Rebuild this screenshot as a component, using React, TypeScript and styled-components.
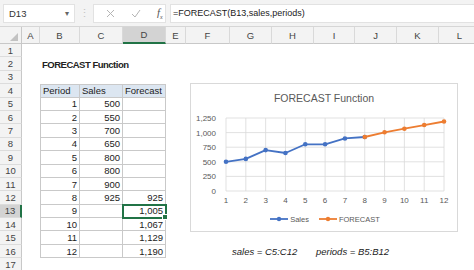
import React from 'react';
import styled, { createGlobalStyle, css } from 'styled-components';

const GlobalStyle = createGlobalStyle`
  html, body { margin: 0; padding: 0; background: #ffffff; }
  body { font-family: 'Liberation Sans', Arial, sans-serif; overflow: hidden; }
`;

const COLS = ['A', 'B', 'C', 'D', 'E', 'F', 'G', 'H', 'I', 'J', 'K', 'L'];
const COL_WIDTHS = [18, 40, 43, 43, 20, 44, 42, 42, 41, 42, 42, 42];
const ROWS = Array.from({ length: 17 }, (_, i) => i + 1);
const SALES = [500, 550, 700, 650, 800, 800, 900, 925];
const FORECAST = ['925', '1,005', '1,067', '1,129', '1,190'];
const GREEN = '#217346';

type CellData = { text: string; align?: 'left' | 'right'; bold?: boolean; italic?: boolean };

// build the cell map for the sheet
const buildCells = () => {
  const cells: Record<string, CellData> = {};
  cells.B2 = { text: 'FORECAST Function', bold: true };
  cells.B4 = { text: 'Period' };
  cells.C4 = { text: 'Sales' };
  cells.D4 = { text: 'Forecast' };
  for (let r = 5; r <= 16; r++) {
    cells[`B${r}`] = { text: String(r - 4), align: 'right' };
  }
  SALES.forEach((v, i) => {
    cells[`C${i + 5}`] = { text: String(v), align: 'right' };
  });
  FORECAST.forEach((v, i) => {
    cells[`D${i + 12}`] = { text: v, align: 'right' };
  });
  cells.G16 = { text: 'sales = C5:C12', italic: true };
  cells.I16 = { text: 'periods = B5:B12', italic: true };
  return cells;
};

const CELLS = buildCells();
const inTable = (col: string, row: number) => ['B', 'C', 'D'].includes(col) && row >= 4 && row <= 16;

// chart geometry (svg coords)
const X0 = 35;
const DX = 19.82;
const Y_ZERO = 86;
const SCALE = 0.0584;
const px = (i: number) => X0 + i * DX;
const py = (v: number) => Y_ZERO - v * SCALE;
const SALES_PTS = SALES.map((v, i) => [px(i), py(v)]);
const FC_PTS = [925, 1005, 1067, 1129, 1190].map((v, i) => [px(i + 7), py(v)]);
const toPath = (pts: number[][]) => pts.map((p, i) => `${i ? 'L' : 'M'}${p[0].toFixed(1)} ${p[1].toFixed(1)}`).join(' ');

const App: React.FC = () => {
  return (
    <Page>
      <GlobalStyle />
      <FormulaBar>
        <NameBox>
          <span>D13</span>
          <DropArrow>▾</DropArrow>
        </NameBox>
        <Grip>⋮</Grip>
        <FxBox>
          <svg width="9" height="9" viewBox="0 0 9 9">
            <path d="M1 1 L8 8 M8 1 L1 8" stroke="#b4b4b4" strokeWidth="1" />
          </svg>
          <svg width="10" height="9" viewBox="0 0 10 9">
            <path d="M1 5 L4 8 L9 1" stroke="#b4b4b4" strokeWidth="1" fill="none" />
          </svg>
          <FxLabel>
            f<sub>x</sub>
          </FxLabel>
        </FxBox>
        <FormulaInput>=FORECAST(B13,sales,periods)</FormulaInput>
      </FormulaBar>

      <Sheet>
        <Corner />
        {COLS.map(c => (
          <ColHeader key={c} $active={c === 'D'}>
            {c}
          </ColHeader>
        ))}
        {ROWS.map(r => (
          <React.Fragment key={r}>
            <RowHeader $active={r === 13}>{r}</RowHeader>
            {COLS.map(c => {
              const data = CELLS[`${c}${r}`];
              const boxed = inTable(c, r);
              return (
                <Cell
                  key={c}
                  $align={data?.align}
                  $bold={data?.bold}
                  $italic={data?.italic}
                  $boxed={boxed}
                  $leftEdge={boxed && c === 'B'}
                  $topEdge={boxed && r === 4}
                  $fill={boxed && r === 4 ? '#dce6f1' : undefined}
                  $selected={c === 'D' && r === 13}
                >
                  {data?.text}
                </Cell>
              );
            })}
          </React.Fragment>
        ))}

        <ChartBox>
          <ChartTitle>FORECAST Function</ChartTitle>
          <svg width="266" height="109" viewBox="0 0 266 109">
            {[0, 250, 500, 750, 1000, 1250].map(v => (
              <g key={v}>
                <line x1={px(0)} x2={px(11)} y1={py(v)} y2={py(v)} stroke="#d9d9d9" strokeWidth="0.8" />
                <text x="25" y={py(v) + 3} textAnchor="end" fontSize="8" fill="#595959" fontFamily="Liberation Sans, Arial, sans-serif">
                  {v.toLocaleString('en-US')}
                </text>
              </g>
            ))}
            {Array.from({ length: 12 }, (_, i) => (
              <g key={i}>
                <line x1={px(i)} x2={px(i)} y1={py(1250)} y2={py(0)} stroke="#d9d9d9" strokeWidth="0.8" />
                <text x={px(i)} y="98" textAnchor="middle" fontSize="8" fill="#595959" fontFamily="Liberation Sans, Arial, sans-serif">
                  {i + 1}
                </text>
              </g>
            ))}
            <path d={toPath(SALES_PTS)} stroke="#4472c4" strokeWidth="1.8" fill="none" strokeLinejoin="round" />
            {SALES_PTS.map((p, i) => (
              <circle key={i} cx={p[0]} cy={p[1]} r="2.3" fill="#4472c4" />
            ))}
            <path d={toPath(FC_PTS)} stroke="#ed7d31" strokeWidth="1.8" fill="none" strokeLinejoin="round" />
            {FC_PTS.map((p, i) => (
              <circle key={i} cx={p[0]} cy={p[1]} r="2.3" fill="#ed7d31" />
            ))}
          </svg>
          <Legend>
            <LegendItem>
              <LegendMark color="#4472c4" />
              Sales
            </LegendItem>
            <LegendItem>
              <LegendMark color="#ed7d31" />
              FORECAST
            </LegendItem>
          </Legend>
        </ChartBox>
      </Sheet>
    </Page>
  );
};

const LegendMark: React.FC<{ color: string }> = ({ color }) => (
  <svg width="18" height="6" viewBox="0 0 18 6">
    <line x1="0" x2="18" y1="3" y2="3" stroke={color} strokeWidth="1.8" />
    <circle cx="9" cy="3" r="2.2" fill={color} />
  </svg>
);

const Page = styled.div`
  width: 474px;
  height: 270px;
  overflow: hidden;
  background: #ffffff;
`;

const FormulaBar = styled.div`
  height: 26px;
  display: flex;
  align-items: center;
  padding-left: 3px;
  background: #f3f3f3;
  border-bottom: 1px solid #d6d6d6;
`;

const NameBox = styled.div`
  width: 72px;
  height: 19px;
  box-sizing: border-box;
  background: #ffffff;
  border: 1px solid #e2e2e2;
  display: flex;
  align-items: center;
  justify-content: space-between;
  padding: 0 5px 0 5px;
  font-size: 9.5px;
  color: #333;
`;

const DropArrow = styled.span`
  font-size: 8px;
  color: #666;
`;

const Grip = styled.span`
  width: 18px;
  text-align: center;
  font-size: 11px;
  color: #c4c4c4;
`;

const FxBox = styled.div`
  width: 73px;
  height: 19px;
  box-sizing: border-box;
  background: #ffffff;
  border: 1px solid #e2e2e2;
  display: flex;
  align-items: center;
  gap: 16px;
  padding-left: 12px;
`;

const FxLabel = styled.span`
  font-family: 'Liberation Serif', 'Times New Roman', serif;
  font-style: italic;
  font-size: 11px;
  color: #555;

  sub {
    font-size: 6px;
  }
`;

const FormulaInput = styled.div`
  flex: 1;
  margin-left: 4px;
  height: 19px;
  box-sizing: border-box;
  background: #ffffff;
  border: 1px solid #e2e2e2;
  border-right: none;
  display: flex;
  align-items: center;
  padding-left: 2px;
  font-size: 9px;
  color: #222;
`;

const Sheet = styled.div`
  position: relative;
  display: grid;
  grid-template-columns: 22px ${COL_WIDTHS.map(w => `${w}px`).join(' ')};
  grid-template-rows: 17px repeat(17, 13.4px);
`;

const Corner = styled.div`
  position: relative;
  background: #f3f3f3;
  border-right: 1px solid #c8c8c8;
  border-bottom: 1px solid #c8c8c8;
  box-sizing: border-box;

  &::after {
    content: '';
    position: absolute;
    right: 3px;
    bottom: 2px;
    border-left: 8px solid transparent;
    border-bottom: 8px solid #c2c2c2;
  }
`;

const ColHeader = styled.div<{ $active?: boolean }>`
  box-sizing: border-box;
  display: flex;
  align-items: center;
  justify-content: center;
  font-size: 9.5px;
  color: #444;
  background: ${p => (p.$active ? '#d3d3d3' : '#f3f3f3')};
  border-right: 1px solid #d9d9d9;
  border-bottom: ${p => (p.$active ? `2px solid ${GREEN}` : '1px solid #c8c8c8')};
`;

const RowHeader = styled.div<{ $active?: boolean }>`
  box-sizing: border-box;
  display: flex;
  align-items: center;
  justify-content: center;
  font-size: 9.5px;
  color: #444;
  background: ${p => (p.$active ? '#d3d3d3' : '#f3f3f3')};
  border-bottom: 1px solid #dcdcdc;
  border-right: ${p => (p.$active ? `2px solid ${GREEN}` : '1px solid #c8c8c8')};
`;

const Cell = styled.div<{
  $align?: 'left' | 'right';
  $bold?: boolean;
  $italic?: boolean;
  $boxed?: boolean;
  $leftEdge?: boolean;
  $topEdge?: boolean;
  $fill?: string;
  $selected?: boolean;
}>`
  position: relative;
  box-sizing: border-box;
  display: flex;
  align-items: center;
  justify-content: ${p => (p.$align === 'right' ? 'flex-end' : 'flex-start')};
  padding: 0 2px;
  font-size: 9.5px;
  white-space: nowrap;
  color: #222;
  font-weight: ${p => (p.$bold ? 700 : 400)};
  font-style: ${p => (p.$italic ? 'italic' : 'normal')};
  letter-spacing: ${p => (p.$bold ? '-0.5px' : '0')};
  background: ${p => p.$fill ?? 'transparent'};
  ${p =>
    p.$boxed &&
    css`
      border-right: 1px solid #c9c9c9;
      border-bottom: 1px solid #c9c9c9;
    `}
  ${p => p.$leftEdge && css`border-left: 1px solid #c9c9c9;`}
  ${p => p.$topEdge && css`border-top: 1px solid #c9c9c9;`}
  ${p =>
    p.$selected &&
    css`
      outline: 2px solid ${GREEN};
      outline-offset: -1px;
      z-index: 1;

      &::after {
        content: '';
        position: absolute;
        right: -3px;
        bottom: -3px;
        width: 4px;
        height: 4px;
        background: ${GREEN};
        border: 1px solid #ffffff;
      }
    `}
`;

const ChartBox = styled.div`
  position: absolute;
  left: 190px;
  top: 56px;
  width: 268px;
  height: 149px;
  box-sizing: border-box;
  background: #ffffff;
  border: 1px solid #d9d9d9;
  padding-top: 7px;
  display: flex;
  flex-direction: column;
  z-index: 2;
`;

const ChartTitle = styled.div`
  height: 14px;
  line-height: 14px;
  text-align: center;
  font-size: 10.5px;
  color: #595959;
`;

const Legend = styled.div`
  height: 10px;
  display: flex;
  align-items: center;
  justify-content: center;
  gap: 10px;
  padding-left: 2px;
`;

const LegendItem = styled.div`
  display: flex;
  align-items: center;
  gap: 2px;
  font-size: 7.5px;
  color: #595959;
`;

export default App;
